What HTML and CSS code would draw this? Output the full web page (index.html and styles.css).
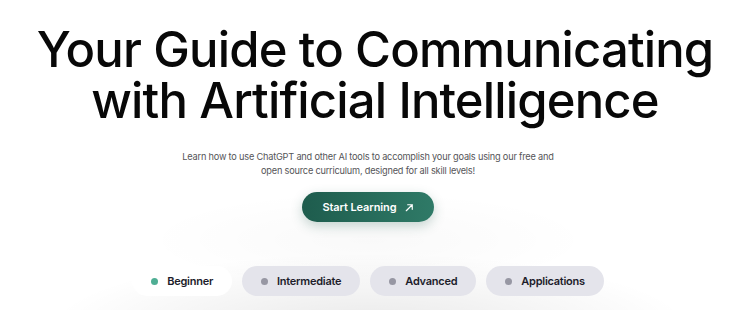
FILE: index.html
```html
<!DOCTYPE html>
<html lang="en">
<head>
<meta charset="utf-8">
<link rel="stylesheet" href="styles.css">
</head>
<body>
<main class="hero">
  <h1 class="title">Your Guide to Communicating<br>with Artificial Intelligence</h1>
  <section class="sub">
    <p class="lead">Learn how to use ChatGPT and other AI tools to accomplish your goals using our free and<br>open source curriculum, designed for all skill levels!</p>
    <a class="cta" href="#">Start Learning
      <svg class="cta-icon" viewBox="0 0 12 12" width="11" height="11"><path d="M2.5 9.5 L9 3 M4 3 H9 V8" fill="none" stroke="#fff" stroke-width="1.3" stroke-linecap="round" stroke-linejoin="round"/></svg>
    </a>
    <div class="tabs">
      <button class="tab active"><span class="dot"></span>Beginner</button>
      <button class="tab"><span class="dot"></span>Intermediate</button>
      <button class="tab"><span class="dot"></span>Advanced</button>
      <button class="tab"><span class="dot"></span>Applications</button>
    </div>
  </section>
</main>
</body>
</html>
```
FILE: styles.css
```css
* { box-sizing: border-box; }
html, body { margin: 0; padding: 0; }
body {
  width: 750px;
  height: 310px;
  overflow: hidden;
  background: #ffffff;
  font-family: Inter, "Noto Sans", sans-serif;
  color: #0a0a0a;
}
.hero {
  display: flex;
  flex-direction: column;
  align-items: center;
  padding-top: 24px;
  height: 310px;
  background:
    radial-gradient(ellipse 460px 110px at 370px 330px, rgba(0,0,0,0.09), rgba(0,0,0,0) 70%),
    radial-gradient(ellipse 320px 70px at 368px 240px, rgba(0,0,0,0.025), rgba(0,0,0,0) 70%),
    #ffffff;
}
.title {
  margin: 0;
  font-size: 49px;
  line-height: 51px;
  font-weight: 500;
  letter-spacing: -0.85px;
  text-align: center;
  color: #080808;
}
.sub {
  align-self: stretch;
  display: flex;
  flex-direction: column;
  align-items: center;
  padding-right: 14px;
}
.lead {
  margin: 24px 0 0;
  font-size: 9.2px;
  line-height: 14px;
  color: #555558;
  text-align: center;
  letter-spacing: -0.2px;
}
.cta {
  margin-top: 14px;
  display: inline-flex;
  align-items: center;
  gap: 7px;
  height: 30px;
  padding: 0 19px 0 20px;
  border-radius: 15px;
  background: linear-gradient(90deg, #1e5c4d, #2f7a67);
  color: #fff;
  text-decoration: none;
  font-size: 11px;
  font-weight: 600;
  letter-spacing: -0.1px;
  box-shadow: 0 4px 12px rgba(30,92,77,0.25);
}
.cta-icon { display: block; }
.tabs {
  margin-top: 44px;
  display: flex;
  gap: 10px;
}
.tab {
  display: inline-flex;
  align-items: center;
  gap: 9px;
  height: 30px;
  padding: 0 19px;
  border: 0;
  border-radius: 15px;
  background: #e4e4eb;
  font-family: Inter, "Noto Sans", sans-serif;
  font-size: 11px;
  font-weight: 600;
  letter-spacing: -0.25px;
  color: #1c1c2a;
}
.tab.active { background: #ffffff; }
.dot {
  width: 7px;
  height: 7px;
  border-radius: 50%;
  background: #9797a3;
}
.tab.active .dot { background: #4fae94; }
```
